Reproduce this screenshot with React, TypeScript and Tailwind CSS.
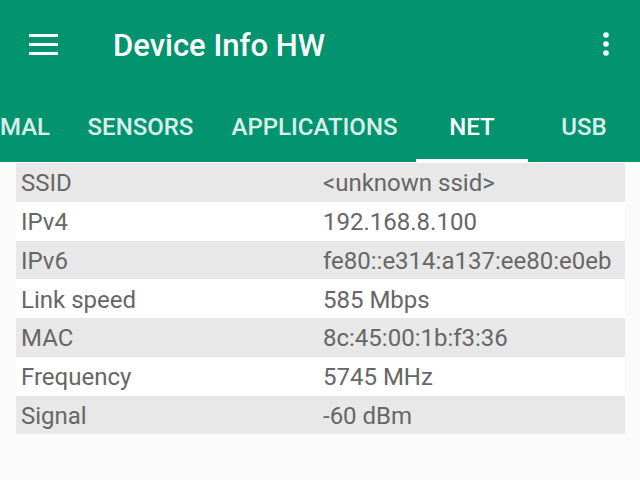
import React from "react";

const tabs = ["THERMAL", "SENSORS", "APPLICATIONS", "NET", "USB"];
const tabWidths: Record<string, string> = {
    SENSORS: "w-[145px]",
    APPLICATIONS: "w-[203px]",
    NET: "w-[112px]",
    USB: "w-[112px]",
};

const rows: [string, string][] = [
    ["SSID", "<unknown ssid>"],
    ["IPv4", "192.168.8.100"],
    ["IPv6", "fe80::e314:a137:ee80:e0eb"],
    ["Link speed", "585 Mbps"],
    ["MAC", "8c:45:00:1b:f3:36"],
    ["Frequency", "5745 MHz"],
    ["Signal", "-60 dBm"],
];

const App = () => {
    return (
        <div className="w-[640px] h-[480px] overflow-hidden bg-[#fafafa] font-['Roboto',sans-serif]">
            <div className="bg-[#02936f]">
                {/* toolbar */}
                <div className="h-[88px] flex items-center pt-[3px]">
                    <div className="w-[29px]" />
                    <svg width="30" height="22" viewBox="0 0 30 22" className="shrink-0 -mt-[3px]">
                        <rect x="0" y="1" width="29" height="3" fill="#fff" />
                        <rect x="0" y="10" width="29" height="3" fill="#fff" />
                        <rect x="0" y="19" width="29" height="3" fill="#fff" />
                    </svg>
                    <span className="ml-[54px] text-white text-[31px] font-medium leading-none">
                        Device Info HW
                    </span>
                    <div className="flex-1" />
                    <svg width="8" height="26" viewBox="0 0 8 26" className="mr-[30px] -mt-[3px]">
                        <circle cx="4" cy="4" r="2.8" fill="#fff" />
                        <circle cx="4" cy="13" r="2.8" fill="#fff" />
                        <circle cx="4" cy="22" r="2.8" fill="#fff" />
                    </svg>
                </div>
                {/* tabs */}
                <div className="h-[74px] flex justify-end overflow-hidden">
                    {tabs.map((t) => (
                        <div
                            key={t}
                            className={`relative shrink-0 h-full flex items-center justify-center pt-[3px] text-[24px] font-medium ${
                                tabWidths[t] || "px-[18px]"
                            } ${t === "NET" ? "text-white" : "text-white/85"}`}
                        >
                            {t}
                            {t === "NET" && (
                                <div className="absolute left-0 right-0 bottom-0 h-[3px] bg-white" />
                            )}
                        </div>
                    ))}
                </div>
            </div>
            {/* net table */}
            <div className="pt-[1px] pl-[16px] w-[625px]">
                {rows.map(([k, v], i) => (
                    <div
                        key={k}
                        className={`h-[38.75px] flex items-center pt-[2px] text-[24px] text-[#666666] ${
                            i % 2 === 0 ? "bg-[#e8e8e8]" : "bg-white"
                        }`}
                    >
                        <span className="w-[307px] pl-[5px]">{k}</span>
                        <span>{v}</span>
                    </div>
                ))}
            </div>
        </div>
    );
};

export default App;
